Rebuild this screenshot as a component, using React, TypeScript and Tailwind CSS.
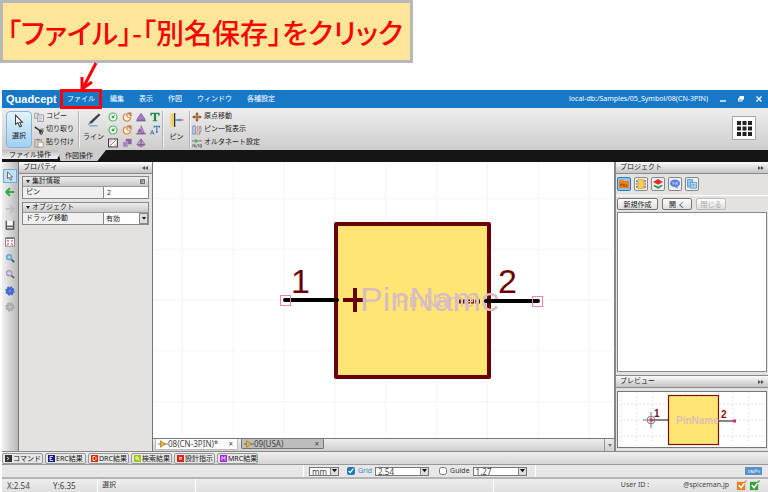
import React from "react";
import clsx from "clsx";

/* ─── Shared bits ─── */
const svgProps = { fill: "none", viewBox: "0 0 12 12" };

const Divider: React.FC = () => (
  <div className="w-px self-stretch bg-[#b4b4b4] border-r border-[#f2f2f2] box-content" />
);

const PanelHeader: React.FC<{ title: string; arrows: string }> = ({
  title,
  arrows,
}) => (
  <div className="flex h-3 shrink-0 items-center justify-between border-b border-[#8a8a8a] bg-linear-to-b from-[#fafafa] to-[#c4c4c4] px-1 text-[7px] text-[#222]">
    <h2>{title}</h2>
    <button aria-label={`${title} collapse`}>
      <svg viewBox="0 0 6 4" className="w-1.5" fill="#555">
        {arrows === "left" ? (
          <path d="M3 0v4L0 2zM6 0v4L3 2z" />
        ) : (
          <path d="M0 0v4l3-2zM3 0v4l3-2z" />
        )}
      </svg>
    </button>
  </div>
);

const DropDown: React.FC<{
  label: string;
  value: string;
  className?: string;
}> = ({ label, value, className }) => (
  <div className={clsx("relative flex border border-[#777] bg-white", className)}>
    <select
      aria-label={label}
      defaultValue={value}
      className="w-full appearance-none bg-transparent pl-0.5 text-[8px] leading-[8px] text-[#444] outline-none"
    >
      <option>{value}</option>
    </select>
    <span className="pointer-events-none absolute inset-y-0 right-0 flex w-2 items-center justify-center border-l border-[#888] bg-[#ddd]">
      <svg viewBox="0 0 6 4" className="w-[5px]">
        <path d="M0 0h6L3 4z" fill="#111" />
      </svg>
    </span>
  </div>
);

/* ─── Icons ─── */
const CursorIcon: React.FC<{ className?: string }> = ({ className }) => (
  <svg {...svgProps} className={className}>
    <path
      d="M3 1v8l2-1.6L6.6 11l1.5-.7-1.5-3.2H9z"
      fill="#fff"
      stroke="#444"
      strokeWidth=".9"
    />
  </svg>
);

const CopyIcon = () => (
  <svg {...svgProps} className="size-2.5">
    <path d="M.5 1.5h5v6h-5z" fill="#ddd" stroke="#999" />
    <path d="M4.500 3.500h7v8h-7z" fill="#e8edf2" stroke="#8a8f96" />
    <path d="M6 6h4M6 8h4M6 10h3" stroke="#9aa6b4" strokeWidth=".8" />
  </svg>
);

const CutIcon = () => (
  <svg {...svgProps} className="size-2.5">
    <path d="M1 3l9 5M1 2l5 4 2 4" stroke="#333" strokeWidth="1.5" />
    <path d="M6 5.500l5.500-1" stroke="#666" />
    <circle cx="8.500" cy="9.500" r="1.600" stroke="#333" strokeWidth="1.200" />
    <circle cx="10" cy="7" r="1.200" stroke="#444" />
  </svg>
);

const PasteIcon = () => (
  <svg {...svgProps} className="size-2.5">
    <rect x="1" y="2" width="8" height="9" fill="#d9c9ae" stroke="#a09580" />
    <path d="M3 1h4v2H3z" fill="#888" />
    <path d="M5 5h6v6H5z" fill="#fff" stroke="#999" />
  </svg>
);

const PenIcon = () => (
  <svg {...svgProps} className="size-3.5">
    <path d="M2 8L10 .500l1.500 1.200L4 9z" fill="#444" />
    <path d="M2 11h7" stroke="#5b9bd5" />
    <path d="M2 8L.500 10.500 4 9z" fill="#888" />
  </svg>
);

const CircleDotIcon = () => (
  <svg {...svgProps} className="size-2.5">
    <circle cx="6" cy="6" r="4.8" fill="#f4fff4" stroke="#58ad69" strokeWidth="1.4" />
    <path d="M4.500 4.500h3v3h-3z" fill="#3f9d54" />
    <path d="M7 5l1.500-1.500" stroke="#58ad69" />
  </svg>
);

const ArcIcon = () => (
  <svg {...svgProps} className="size-2.5">
    <path
      d="M4.500 2A4.600 4.600 0 1 0 10.600 7.200"
      fill="#fff2e4"
      stroke="#e58a3c"
      strokeWidth="1.6"
    />
    <path d="M6 6V1.500" stroke="#a3582a" />
    <path d="M6.500 1h4.500v4.500z" fill="#d98a4a" stroke="#a3582a" strokeWidth=".6" />
    <path d="M6 6l4.500 1" stroke="#e58a3c" />
  </svg>
);

const PyramidIcon = () => (
  <svg {...svgProps} className="size-2.5">
    <path d="M6 1.500L11 9H1z" fill="#a77ab8" stroke="#81539a" strokeWidth=".8" />
    <path d="M.500 10.500h11" stroke="#6f4685" strokeWidth="1.400" />
  </svg>
);

const PrismIcon = () => (
  <svg {...svgProps} className="size-2.5">
    <path d="M6 1l4 8H6z" fill="#bf9acc" stroke="#81539a" strokeWidth=".8" />
    <path d="M1.500 9L4 4l2 2v3z" fill="#8e5ca5" />
    <path d="M.500 10.500h11" stroke="#6f4685" strokeWidth="1.400" />
  </svg>
);

const PrismFlatIcon = () => (
  <svg {...svgProps} className="size-2.5">
    <path d="M6 1l5 7-5 3-5-3z" fill="#c4a3d0" stroke="#81539a" strokeWidth=".8" />
    <path d="M6 2v8M2 8h8" stroke="#6f4685" />
  </svg>
);

const SlashBoxIcon = () => (
  <svg {...svgProps} className="size-2.5">
    <rect x=".7" y="1.200" width="10.500" height="9.500" fill="#fff" stroke="#333" strokeWidth="1.200" />
    <path d="M2 9.500L9 3" stroke="#555" />
    <path d="M1.500 2h5L2 7zM10.500 5v5H6z" fill="#f5bcd8" />
  </svg>
);

const CubeIcon = () => (
  <svg {...svgProps} className="size-2.5">
    <path d="M4.500 1h7v6.500h-7z" fill="#8c60a3" />
    <path d="M1 4.500h6V11H1z" fill="#a983bb" stroke="#d9c6e2" strokeWidth=".6" />
  </svg>
);

// Text tool, a slab-serif T drawn in bars
const TextIcon = () => (
  <svg {...svgProps} className="size-2.5">
    <path d="M.500 1h11v3.500H10.200L9.500 2.500H7.300v7.300l1.500.4v.800H3.200v-.800l1.500-.400V2.500H2.500l-.700 2H.500z" fill="#1f8a4f" />
  </svg>
);

const TextSizeIcon = () => (
  <svg {...svgProps} className="size-2.5">
    <path d="M5 3.200V1.500h6.500v1.700M8.200 1.500v7M7 8.500h2.500" stroke="#2a7bc0" strokeWidth="1.3" />
    <path d="M.500 11.500l2.200-5 2.200 5M1.500 9.800h2.500" stroke="#35679a" />
  </svg>
);

const PinIcon = () => (
  <svg {...svgProps} className="size-3.5">
    <path d="M.500.500h3v11h-3z" fill="#f0d264" />
    <path d="M4 0v12" stroke="#222" strokeWidth="1" />
    <path d="M4.500 6H9" stroke="#2b88c9" strokeWidth="1.2" />
    <path d="M9 6h2.500" stroke="#d66" strokeWidth="1.200" />
    <path d="M8.500 5v2" stroke="#2b88c9" />
  </svg>
);

const OriginIcon = () => (
  <svg {...svgProps} className="size-2.5">
    <path d="M6 0l2.2 3H3.8zM6 12l2.2-3H3.8zM0 6l3-2.2v4.4zM12 6L9 3.8v4.4z" fill="#8a5a2b" />
    <path d="M6 2v8M2 6h8" stroke="#8a5a2b" strokeWidth="1.6" />
    <circle cx="6" cy="6" r="2.2" fill="#a9713a" />
  </svg>
);

const PinListIcon = () => (
  <svg {...svgProps} className="size-2.5">
    <path d="M1 1h3v10H1z" fill="#c8d2f2" stroke="#6d84cc" />
    <path d="M6 2h3v3H6zM6 7h3v4H6z" fill="#f3d5c0" stroke="#c07a55" strokeWidth=".8" />
    <path d="M10 1l1 5-2 5" stroke="#6a86d0" />
  </svg>
);

const AlternateIcon = () => (
  <svg {...svgProps} className="size-2.5">
    <path d="M0 3.5h4M8 3.500h4" stroke="#3a7a55" />
    <path d="M4 1v5l4-2.500z" fill="#4aa563" />
    <path d="M1 11V8h2v3M4.500 8v3H6M6.500 8h2M7.500 8v3M9.500 8h2v3h-2z" stroke="#555" strokeWidth=".8" />
  </svg>
);

const GridDotsIcon = () => (
  <svg viewBox="0 0 15 15" className="w-[15px]" fill="#222">
    {[0, 5.5, 11].map((y) =>
      [0, 5.5, 11].map((x) => (
        <rect key={`${x}-${y}`} x={x} y={y} width="4" height="4" />
      )),
    )}
  </svg>
);

const SymbolIcon = () => (
  <svg {...svgProps} className="size-2.5 shrink-0">
    <path d="M0 6h12" stroke="#555" />
    <path d="M3 2l6 4-6 4z" fill="#e9b52e" stroke="#a5701a" strokeWidth=".8" />
  </svg>
);

/* ─── Title bar ─── */
const menus = ["ファイル", "編集", "表示", "作図", "ウィンドウ", "各種設定"];

const TitleBar: React.FC = () => (
  <header className="flex h-[18px] shrink-0 items-center bg-[#1878c8] text-[7px] text-white">
    <h1 className="w-[65px] pl-1 font-['Liberation_Sans',sans-serif] text-[11px] leading-none font-bold">
      Quadcept
    </h1>
    <nav className="flex gap-[15px]">
      {menus.map((menu, i) => (
        <button key={menu} className="relative whitespace-nowrap">
          {menu}
          {i === 0 && (
            <span className="pointer-events-none absolute -inset-x-[7px] -inset-y-[5px] border-[3px] border-[#fb0007]" />
          )}
        </button>
      ))}
    </nav>
    <span className="ml-auto">local-db:/Samples/05_Symbol/08(CN-3PIN)</span>
    <div className="ml-3 flex items-center gap-3 pr-1.5">
      <button aria-label="Minimize">
        <svg viewBox="0 0 6 6" className="size-1.5">
          <path d="M0 5h6" stroke="#fff" strokeWidth="1.4" />
        </svg>
      </button>
      <button aria-label="Restore">
        <svg viewBox="0 0 6 6" className="size-1.5">
          <path d="M1.5 0H6v3.5H1.5zM0 2h4.5v3.5H0z" fill="#fff" />
          <path d="M1 4h2.5" stroke="#1878c8" />
        </svg>
      </button>
      <button aria-label="Close">
        <svg viewBox="0 0 6 6" className="size-1.5">
          <path d="M.5.5l5 5M5.5.5l-5 5" stroke="#fff" strokeWidth="1.3" />
        </svg>
      </button>
    </div>
  </header>
);

/* ─── Ribbon ─── */
const shapeTools = [
  { name: "Circle", icon: <CircleDotIcon /> },
  { name: "Arc", icon: <ArcIcon /> },
  { name: "Polygon", icon: <PyramidIcon /> },
  { name: "Text", icon: <TextIcon /> },
  { name: "Circle 3 point", icon: <CircleDotIcon /> },
  { name: "Arc 3 point", icon: <ArcIcon /> },
  { name: "Shape", icon: <PrismIcon /> },
  { name: "Text size", icon: <TextSizeIcon /> },
  { name: "Rectangle", icon: <SlashBoxIcon /> },
  { name: "Fill", icon: <CubeIcon /> },
  { name: "Mirror", icon: <PrismFlatIcon /> },
];

const RibbonList: React.FC<{ items: { label: string; icon: React.ReactNode }[] }> = ({
  items,
}) => (
  <div className="flex flex-col gap-0.5">
    {items.map(({ label, icon }) => (
      <button key={label} className="flex h-[11px] items-center gap-0.5 whitespace-nowrap">
        {icon}
        {label}
      </button>
    ))}
  </div>
);

const Ribbon: React.FC = () => (
  <div className="flex h-[42px] shrink-0 items-start bg-linear-to-b from-[#eeeeee] to-[#cecdcc] px-1 pt-[3px] pb-0.5 text-[7px] text-[#1c1c1c]">
    <button className="flex h-[37px] w-[26px] flex-col items-center justify-between rounded-sm border border-[#85b4d8] bg-linear-to-b from-[#e4f2fc] to-[#9fd0f2] pt-0.5 pb-1.5">
      <CursorIcon className="size-3.5" />
      選択
    </button>
    <div className="flex w-[46px] self-stretch pl-0.5">
      <RibbonList
        items={[
          { label: "コピー", icon: <CopyIcon /> },
          { label: "切り取り", icon: <CutIcon /> },
          { label: "貼り付け", icon: <PasteIcon /> },
        ]}
      />
    </div>
    <Divider />
    <button className="flex h-[37px] w-[27px] flex-col items-center justify-between whitespace-nowrap pt-0.5 pb-1.5">
      <PenIcon />
      ライン
    </button>
    <div className="grid grid-cols-4 gap-x-1 gap-y-0.5 pr-0.5 pl-px">
      {shapeTools.map((tool) => (
        <button key={tool.name} aria-label={tool.name} className="flex h-[11px] items-center">
          {tool.icon}
        </button>
      ))}
    </div>
    <Divider />
    <button className="flex h-[37px] w-[25px] flex-col items-center justify-between pt-0.5 pb-1.5">
      <PinIcon />
      ピン
    </button>
    <Divider />
    <div className="pl-px">
      <RibbonList
        items={[
          { label: "原点移動", icon: <OriginIcon /> },
          { label: "ピン一覧表示", icon: <PinListIcon /> },
          { label: "オルタネート設定", icon: <AlternateIcon /> },
        ]}
      />
    </div>
    <button
      aria-label="Apps"
      className="mt-[5px] mr-2 ml-auto flex size-6 items-center justify-center border border-[#aaa] bg-[#fcfcfc]"
    >
      <GridDotsIcon />
    </button>
  </div>
);

const RibbonTabs: React.FC = () => (
  <div className="flex h-3 shrink-0 bg-[#151515] text-[7px] leading-[8px] text-[#222]">
    <button className="-mr-1 h-[9px] w-[60px] bg-linear-to-b from-[#bdbdbd] to-[#f5f5f5] pr-1 [clip-path:polygon(0_0,100%_0,92%_100%,0_100%)]">
      ファイル操作
    </button>
    <button className="h-[11px] w-[48px] bg-[#cecdcc] pr-1.5 [clip-path:polygon(0_0,100%_0,82%_100%,5%_100%)]">
      作図操作
    </button>
  </div>
);

/* ─── Left side ─── */
const sideTools: { name: string; icon: React.ReactNode }[] = [
  { name: "Select", icon: <CursorIcon className="size-2.5" /> },
  {
    name: "Undo",
    icon: (
      <svg {...svgProps} className="size-2.5">
        <path d="M1 6l5-4.5M1 6l5 4.5M1 6h10" stroke="#37a548" strokeWidth="2.4" />
      </svg>
    ),
  },
  {
    name: "Redo",
    icon: (
      <svg {...svgProps} className="size-2.5">
        <path d="M11 6L6 1.5M11 6l-5 4.500M11 6H1" stroke="#bdbdbd" strokeWidth="1.8" />
      </svg>
    ),
  },
  {
    name: "Save",
    icon: (
      <svg {...svgProps} className="size-2.5">
        <path d="M1.5 1v10h9V1" stroke="#444" strokeWidth="1.4" />
        <path d="M3 1h6v5H3z" fill="#fff" />
        <path d="M2 7.500h8" stroke="#444" strokeWidth="1.2" />
      </svg>
    ),
  },
  {
    name: "Fit",
    icon: (
      <svg {...svgProps} className="size-2.5">
        <rect x=".7" y="1" width="10.6" height="10" fill="#fff" stroke="#777" />
        <path d="M1 1.500h10" stroke="#555" strokeWidth="1.2" />
        <path d="M2.500 3.500l2 2M9.500 3.500l-2 2M2.500 9.500l2-2M9.500 9.500l-2-2" stroke="#e6608f" strokeWidth="1.6" />
      </svg>
    ),
  },
  {
    name: "Zoom in",
    icon: (
      <svg {...svgProps} className="size-2.5">
        <path d="M7 7l4 4" stroke="#555" strokeWidth="2" />
        <circle cx="5" cy="5" r="3.5" fill="#56b0e4" stroke="#7d9fb6" />
        <path d="M3 5h4M5 3v4" stroke="#d6effc" />
      </svg>
    ),
  },
  {
    name: "Zoom out",
    icon: (
      <svg {...svgProps} className="size-2.5">
        <path d="M7 7l4 4" stroke="#666" strokeWidth="2" />
        <circle cx="5" cy="5" r="3.5" fill="#c6aed4" stroke="#999" />
        <path d="M3 5h4" stroke="#fff" />
      </svg>
    ),
  },
  {
    name: "Settings",
    icon: (
      <svg {...svgProps} className="size-2.5">
        <circle cx="6" cy="6" r="4.6" fill="#4568cc" stroke="#4568cc" strokeWidth="2" strokeDasharray="2 1.6" />
        <circle cx="6" cy="6" r="1.6" fill="#6f8ce0" />
      </svg>
    ),
  },
  {
    name: "Options",
    icon: (
      <svg {...svgProps} className="size-2.5">
        <circle cx="6" cy="6" r="4.6" fill="#b0b0b0" stroke="#a5a5a5" strokeWidth="2" strokeDasharray="2 1.6" />
        <circle cx="6" cy="6" r="1.6" fill="#c4c4c4" />
      </svg>
    ),
  },
];

const SideToolbar: React.FC = () => (
  <div className="w-[17px] shrink-0 border-r border-[#777] bg-linear-to-r from-[#f1f1f1] to-[#b9b9b9] pt-[7px]">
    <div className="flex h-[145px] flex-col items-center justify-between">
      {sideTools.map((tool, i) => (
        <button
          key={tool.name}
          aria-label={tool.name}
          className={clsx(
            "flex size-3.5 items-center justify-center",
            i === 0 && "border border-[#6aaede] bg-[#bfe0f7]",
          )}
        >
          {tool.icon}
        </button>
      ))}
    </div>
  </div>
);

const PropertyGroup: React.FC<{
  title: string;
  extra?: boolean;
  children: React.ReactNode;
}> = ({ title, extra, children }) => (
  <section className="border border-[#888]">
    <h3 className="flex h-2.5 items-center gap-0.5 border-b border-[#999] bg-linear-to-b from-[#eee] to-[#c8c8c8] px-[3px]">
      <svg viewBox="0 0 4 3" className="w-1">
        <path d="M0 0h4L2 3z" fill="#222" />
      </svg>
      {title}
      {extra && (
        <svg viewBox="0 0 5 5" className="ml-auto size-[5px]" fill="none">
          <path d="M.5.5h4v4h-4zM.5 2h4M2 2v2.5" stroke="#555" strokeWidth=".8" />
        </svg>
      )}
    </h3>
    {children}
  </section>
);

const PropertyPanel: React.FC = () => (
  <aside className="flex w-[134px] shrink-0 flex-col border-r border-[#777] bg-[#e3e2e1] text-[7px] text-[#222]">
    <PanelHeader title="プロパティ" arrows="left" />
    <div className="flex flex-col gap-[3px] px-[3px] pt-0.5">
      <PropertyGroup title="集計情報" extra>
        <div className="flex h-[11px] items-center bg-[#f0f0f0]">
          <label htmlFor="pin-count" className="w-20 px-[3px]">
            ピン
          </label>
          <input
            id="pin-count"
            readOnly
            value="2"
            className="h-full min-w-0 flex-1 border-l border-[#888] bg-white px-[3px] outline-none"
          />
        </div>
      </PropertyGroup>
      <PropertyGroup title="オブジェクト">
        <div className="flex h-[11px] items-center bg-[#f0f0f0]">
          <label htmlFor="drag-move" className="w-20 px-[3px]">
            ドラッグ移動
          </label>
          <div className="relative h-full min-w-0 flex-1 border-l border-[#888] bg-white">
            <select
              id="drag-move"
              defaultValue="有効"
              className="block h-full w-full appearance-none px-0.5 leading-[9px] outline-none"
            >
              <option>有効</option>
            </select>
            <span className="pointer-events-none absolute inset-y-0 right-0 flex w-[9px] items-center justify-center border border-[#888] bg-[#ddd]">
              <svg viewBox="0 0 6 4" className="w-1">
                <path d="M0 0h6L3 4z" fill="#111" />
              </svg>
            </span>
          </div>
        </div>
      </PropertyGroup>
    </div>
  </aside>
);

/* ─── Canvas ─── */
const SymbolCanvas: React.FC = () => (
  <svg className="block min-h-0 w-full flex-1 bg-white" fontFamily="Liberation Sans, sans-serif">
    <defs>
      <pattern id="grid" x="29" y="36" width="50.8" height="50.8" patternUnits="userSpaceOnUse">
        <path d="M.5 0V50.8M0 .5H50.8" stroke="#f4f4f4" />
      </pattern>
    </defs>
    <rect width="100%" height="100%" fill="url(#grid)" />
    <rect x="183" y="62" width="153" height="153" fill="#ffe573" stroke="#6b0000" strokeWidth="4" strokeLinejoin="round" />
    <path d="M190 138h23M202 126v24" stroke="#6b0000" strokeWidth="4" />
    <path d="M306 139.500h21" stroke="#6b0000" strokeWidth="4" strokeDasharray="3 1" />
    <g fill="#d8bdc0">
      <text x="207" y="149" fontSize="34">
        PinName
      </text>
      <text x="243" y="145" fontSize="19">
        PinName
      </text>
    </g>
    <path d="M132 138h52M333 139h52" stroke="#000" strokeWidth="4" strokeLinecap="round" />
    <g stroke="#f07fc0" fill="none">
      <rect x="127.5" y="133.5" width="10" height="10" />
      <rect x="379.5" y="134.5" width="10" height="10" />
    </g>
    <g fill="#6b0000" fontSize="34">
      <text x="138" y="131">
        1
      </text>
      <text x="345" y="131">
        2
      </text>
    </g>
  </svg>
);

const documents = [
  { name: "08(CN-3PIN)*", active: true },
  { name: "09(USA)", active: false },
];

const DocumentTabs: React.FC = () => (
  <div className="flex h-[13px] shrink-0 items-start gap-[3px] border-t border-[#777] bg-linear-to-b from-[#eee] to-[#cfcfcf] pl-0.5 text-[#444]">
    {documents.map(({ name, active }) => (
      <div
        key={name}
        className={clsx(
          "flex w-[83px] items-center rounded-b-xs border border-t-0 px-0.5",
          active ? "h-[11px] border-[#bbb] bg-white" : "h-2.5 border-[#777] bg-[#bdbdbd]",
        )}
      >
        <SymbolIcon />
        <button className="text-[8px] leading-[8px]">{name}</button>
        <button aria-label={`Close ${name}`} className="mr-0.5 ml-auto text-[8px] leading-[8px]">
          ×
        </button>
      </div>
    ))}
    <button
      aria-label="Documents"
      className="ml-auto flex h-full w-2.5 items-center justify-center border-l border-[#999]"
    >
      <svg viewBox="0 0 4 3" className="w-1">
        <path d="M0 0h4L2 3z" fill="#777" />
      </svg>
    </button>
  </div>
);

/* ─── Right side ─── */
const projectTools: { name: string; icon: React.ReactNode }[] = [
  {
    name: "Project",
    icon: (
      <svg {...svgProps} className="size-2.5">
        <path d="M0 1h5l1 1.5h6V11H0z" fill="#f08018" />
        <path d="M2 9V6h1.5v1.5H2M5.500 9V6h1v3M8 9h1.500V6" stroke="#8a4208" strokeWidth=".9" />
      </svg>
    ),
  },
  {
    name: "Component",
    icon: (
      <svg {...svgProps} className="size-2.5">
        <path d="M0 2.500h2M0 6h2M0 9.500h2M10 2.500h2M10 6h2M10 9.500h2" stroke="#444" strokeWidth="1.4" />
        <rect x="2.500" y=".8" width="7" height="10.500" fill="#f7cf56" stroke="#c99b3a" strokeWidth=".8" />
      </svg>
    ),
  },
  {
    name: "Layers",
    icon: (
      <svg {...svgProps} className="size-2.5">
        <path d="M6 5l6 3-6 4-6-4z" fill="#33a05a" />
        <path d="M6 3l6 3-6 3-6-3z" fill="#eee" />
        <path d="M6 0l6 3.5L6 7 0 3.5z" fill="#dd2f2f" />
      </svg>
    ),
  },
  {
    name: "VR",
    icon: (
      <svg {...svgProps} className="size-2.5">
        <path d="M6 .5c3.300 0 6 1.900 6 4.500 0 2-1.500 3.500-3.200 4.100l.7 2.700L6 9.500C2.700 9.500 0 7.600 0 5S2.700.5 6 .5z" fill="#5c7fe6" />
        <path d="M3 3.500l1 3 1-3M7 7V4h1.800v1.500H7M8 5.500L9 7" stroke="#cfdafb" strokeWidth=".8" />
      </svg>
    ),
  },
  {
    name: "Sheets",
    icon: (
      <svg {...svgProps} className="size-2.5">
        <path d="M.5.5h6v9h-6z" fill="#8fc6ee" stroke="#4a94d0" />
        <path d="M4 4h7.500v7H4z" fill="#c7e3f7" stroke="#4a94d0" />
        <path d="M5 6.500h5.500M5 8.500h5.500M7.500 5v5" stroke="#5c9fd4" strokeWidth=".7" />
      </svg>
    ),
  },
];

const PreviewDrawing: React.FC = () => (
  <svg viewBox="0 0 146 55" className="h-full w-full" fontFamily="Liberation Sans, sans-serif">
    <path
      d="M2 0v55M18 0v55M34 0v55M50 0v55M66 0v55M82 0v55M98 0v55M114 0v55M130 0v55M0 12h146M0 28h146M0 44h146"
      stroke="#e6e6e6"
      strokeDasharray="2 2"
    />
    <rect x="49.5" y="3.5" width="50" height="49" fill="#ffe573" stroke="#7a1111" strokeWidth="1.2" />
    <text x="57" y="32" fontSize="10" fontWeight="bold" fill="#dfbdb3">
      PinName
    </text>
    <path d="M32 28h18M100 29h15" stroke="#111" strokeWidth="1.2" />
    <circle cx="32" cy="28" r="3.8" fill="none" stroke="#777" />
    <path d="M24 28h8M32 20v16" stroke="#777" />
    <path d="M30.5 26.500h3v3h-3zM114 27.500h3v3h-3z" fill="#e0208a" />
    <g fontSize="10" fontWeight="bold" fill="#7a1111">
      <text x="35" y="25">
        1
      </text>
      <text x="102" y="26">
        2
      </text>
    </g>
  </svg>
);

const ProjectPanel: React.FC = () => (
  <aside className="flex w-[154px] shrink-0 flex-col border-l-2 border-[#888] bg-[#e3e2e1] text-[7px] text-[#222]">
    <PanelHeader title="プロジェクト" arrows="right" />
    <div className="flex gap-[3px] border-b border-white px-px pt-[3px] pb-1">
      {projectTools.map((tool, i) => (
        <button
          key={tool.name}
          aria-label={tool.name}
          className={clsx(
            "flex size-3.5 items-center justify-center rounded-xs border",
            i === 0 ? "border-[#2a7bc0] bg-[#8cc4ee]" : "border-[#888] bg-[#eee]",
          )}
        >
          {tool.icon}
        </button>
      ))}
    </div>
    <div className="flex gap-1 px-px py-0.5 leading-[9px]">
      {["新規作成", "開 く", "閉じる"].map((label, i) => (
        <button
          key={label}
          disabled={i === 2}
          className={clsx(
            "h-3 rounded-xs border bg-linear-to-b from-white to-[#ddd]",
            i === 0 ? "w-[41px]" : "w-[30px]",
            i === 2 ? "border-[#bbb] text-[#aaa]" : "border-[#777]",
          )}
        >
          {label}
        </button>
      ))}
    </div>
    <div className="mx-px min-h-0 flex-1 border border-[#888] bg-white" />
    <div className="mt-[3px] border-t border-[#888]">
      <PanelHeader title="プレビュー" arrows="right" />
    </div>
    <div className="mx-px my-[3px] h-[57px] border border-[#777] bg-white">
      <PreviewDrawing />
    </div>
  </aside>
);

/* ─── Bottom bars ─── */
const resultTabs = [
  { label: "コマンド", badge: "bg-[#333]", mark: "M1 1l2 1.5L1 4" },
  { label: "ERC結果", badge: "bg-[#1c1c8c]", mark: "M4 .5H1v4h3M1 2.5h2" },
  { label: "DRC結果", badge: "bg-[#e02a10]", mark: "M1 .5h2l1 1v2l-1 1H1z" },
  { label: "検索結果", badge: "bg-[#9acb1c]", mark: "M1 1h2v2H1zM3 3l1.5 1.5" },
  { label: "設計指示", badge: "bg-[#d8281c]", mark: "M1 1.5h3M1 3h3" },
  { label: "MRC結果", badge: "bg-[#a028e0]", mark: "M1 4.5v-4l1.5 2L4 .5v4" },
];

const ResultTabs: React.FC = () => (
  <div className="flex h-[13px] shrink-0 items-center gap-0.5 border-t border-[#888] bg-linear-to-b from-[#eee] to-[#d6d6d6] text-[7px] leading-[9px] text-[#222]">
    {resultTabs.map(({ label, badge, mark }) => (
      <button
        key={label}
        className="flex h-[11px] w-[41px] items-center gap-px rounded-xs border border-[#999] bg-[#e6e6e6] px-0.5 whitespace-nowrap"
      >
        <span className={clsx("flex size-[7px] shrink-0 items-center justify-center", badge)}>
          <svg viewBox="0 0 5 5" className="size-[5px]">
            <path d={mark} stroke="#fff" strokeWidth=".8" fill="none" />
          </svg>
        </span>
        {label}
      </button>
    ))}
  </div>
);

const GridBar: React.FC = () => (
  <div className="flex h-[13px] shrink-0 items-center border-t border-[#999] bg-[#e8e7e7] text-[7px] text-[#333]">
    <div className="w-[302px] self-stretch border-r border-white" />
    <DropDown label="Unit" value="mm" className="ml-[5px] h-[9px] w-[30px]" />
    <label className="ml-2 flex items-center gap-[3px] text-[#3a88c0]">
      <input type="checkbox" defaultChecked className="size-2 accent-[#1f78b8]" />
      Grid
    </label>
    <DropDown label="Grid size" value="2.54" className="ml-[3px] h-[9px] w-[54px]" />
    <label className="ml-2.5 flex items-center gap-[3px]">
      <input type="checkbox" className="size-2" />
      Guide
    </label>
    <DropDown label="Guide size" value="1.27" className="ml-[3px] h-[9px] w-[54px]" />
    <div className="ml-2 w-px self-stretch bg-white" />
    <button aria-label="Input" className="mr-1.5 ml-auto h-2 w-[17px] bg-[#5a92c8]">
      <svg viewBox="0 0 17 8" className="block">
        <path d="M4 3v3M6 6V3l2 3V3M10 6V3h2v2M14 3v3" stroke="#d5e6f5" strokeWidth=".9" fill="none" />
      </svg>
    </button>
  </div>
);

const CheckBadge: React.FC<{ color: string }> = ({ color }) => (
  <svg {...svgProps} className="size-[11px]">
    <rect x="1" y="2" width="9" height="9" fill={color} />
    <path d="M3 5.5l2.500 3L11 1" stroke="#fff" strokeWidth="1.6" />
    <path d="M9 3l2.500-2.500" stroke={color} strokeWidth="1.3" />
  </svg>
);

const StatusBar: React.FC = () => (
  <footer className="flex h-[15px] shrink-0 items-center border-t-2 border-[#b5b5b5] bg-linear-to-b from-[#eeeded] to-[#e0dfdf] text-[7px] text-[#444]">
    <div className="flex w-[95px] pl-[5px] text-[8px] leading-[9px]">
      <span className="w-[46px]">X:2.54</span>
      <span>Y:6.35</span>
    </div>
    <div className="flex w-[98px] items-center self-stretch border-l border-white pl-1">
      選択
    </div>
    <div className="w-[299px] self-stretch border-x border-white" />
    <span className="ml-auto">User ID :</span>
    <span className="ml-[34px]">@spiceman.jp</span>
    <div className="mr-2 ml-[7px] flex gap-0.5">
      <CheckBadge color="#e8801e" />
      <CheckBadge color="#38a03c" />
    </div>
  </footer>
);

/* ─── Page ─── */
export default function App() {
  return (
    <div className="flex h-screen min-h-[480px] flex-col bg-white font-['Noto_Sans','Noto_Sans_CJK_JP',sans-serif]">
      <div className="relative h-[90px] shrink-0">
        <p className="flex h-[63px] w-[413px] items-center border-[3px] border-[#b8b8b8] bg-[#ffe699] pl-1 font-['Noto_Sans_CJK_JP',sans-serif] text-[28px] font-medium whitespace-nowrap text-[#fb0007] [font-feature-settings:'palt']">
          「ファイル」-「別名保存」をクリック
        </p>
        <svg viewBox="0 0 20 30" className="absolute top-[61px] left-[79px] z-10 h-[30px] w-5" fill="none">
          <path d="M17 2L4 27M3 16v12l10-7" stroke="#fb0007" strokeWidth="3" />
        </svg>
      </div>
      <div className="flex min-h-0 flex-1 flex-col pl-0.5">
        <TitleBar />
        <Ribbon />
        <RibbonTabs />
        <main className="flex min-h-0 flex-1">
          <SideToolbar />
          <PropertyPanel />
          <section className="flex min-w-0 flex-1 flex-col">
            <SymbolCanvas />
            <DocumentTabs />
          </section>
          <ProjectPanel />
        </main>
        <ResultTabs />
        <GridBar />
        <StatusBar />
      </div>
    </div>
  );
}
